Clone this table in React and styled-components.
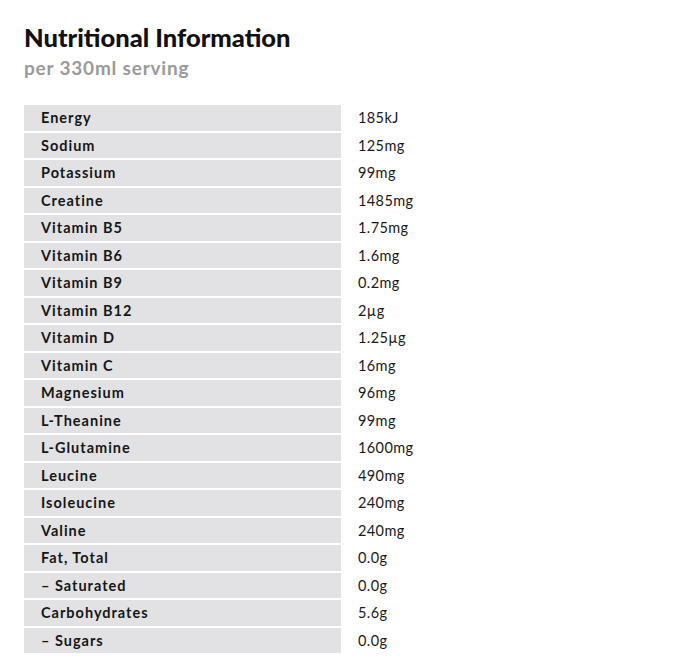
import React from "react";
import styled, { createGlobalStyle } from "styled-components";

const rows = [
  ["Energy", "185kJ"],
  ["Sodium", "125mg"],
  ["Potassium", "99mg"],
  ["Creatine", "1485mg"],
  ["Vitamin B5", "1.75mg"],
  ["Vitamin B6", "1.6mg"],
  ["Vitamin B9", "0.2mg"],
  ["Vitamin B12", "2µg"],
  ["Vitamin D", "1.25µg"],
  ["Vitamin C", "16mg"],
  ["Magnesium", "96mg"],
  ["L-Theanine", "99mg"],
  ["L-Glutamine", "1600mg"],
  ["Leucine", "490mg"],
  ["Isoleucine", "240mg"],
  ["Valine", "240mg"],
  ["Fat, Total", "0.0g"],
  ["– Saturated", "0.0g"],
  ["Carbohydrates", "5.6g"],
  ["– Sugars", "0.0g"],
];

function App() {
  return (
    <>
      <GlobalStyle />
      <Page>
        <Title>Nutritional Information</Title>
        <Subtitle>per 330ml serving</Subtitle>
        <Table>
          {rows.map(([name, amount]) => (
            <Row key={name}>
              <Label>{name}</Label>
              <Value>{amount}</Value>
            </Row>
          ))}
        </Table>
      </Page>
    </>
  );
}

export default App;

const GlobalStyle = createGlobalStyle`
  body {
    margin: 0;
    background: #fff;
    font-family: "Lato", "Noto Sans", sans-serif;
  }
`;

const Page = styled.div`
  padding: 22px 24px 0 24px;
`;

const Title = styled.h1`
  margin: 0;
  font-size: 25.5px;
  line-height: 30px;
  font-weight: 900;
  color: #111;
`;

const Subtitle = styled.h2`
  margin: 4px 0 0 0;
  font-size: 19px;
  line-height: 24px;
  font-weight: 700;
  color: #9a9a9a;
  letter-spacing: 0.8px;
`;

const Table = styled.div`
  margin-top: 25px;
  display: flex;
  flex-direction: column;
  gap: 2px;
`;

const Row = styled.div`
  display: grid;
  grid-template-columns: 317px 1fr;
  height: 25.5px;
  align-items: center;
`;

const Label = styled.div`
  background: #e2e2e4;
  height: 100%;
  display: flex;
  align-items: center;
  padding-left: 17px;
  font-size: 14.5px;
  font-weight: 700;
  letter-spacing: 1px;
  color: #161616;
`;

const Value = styled.div`
  padding-left: 17px;
  font-size: 14.5px;
  color: #1a1a1a;
  letter-spacing: 0.4px;
`;
